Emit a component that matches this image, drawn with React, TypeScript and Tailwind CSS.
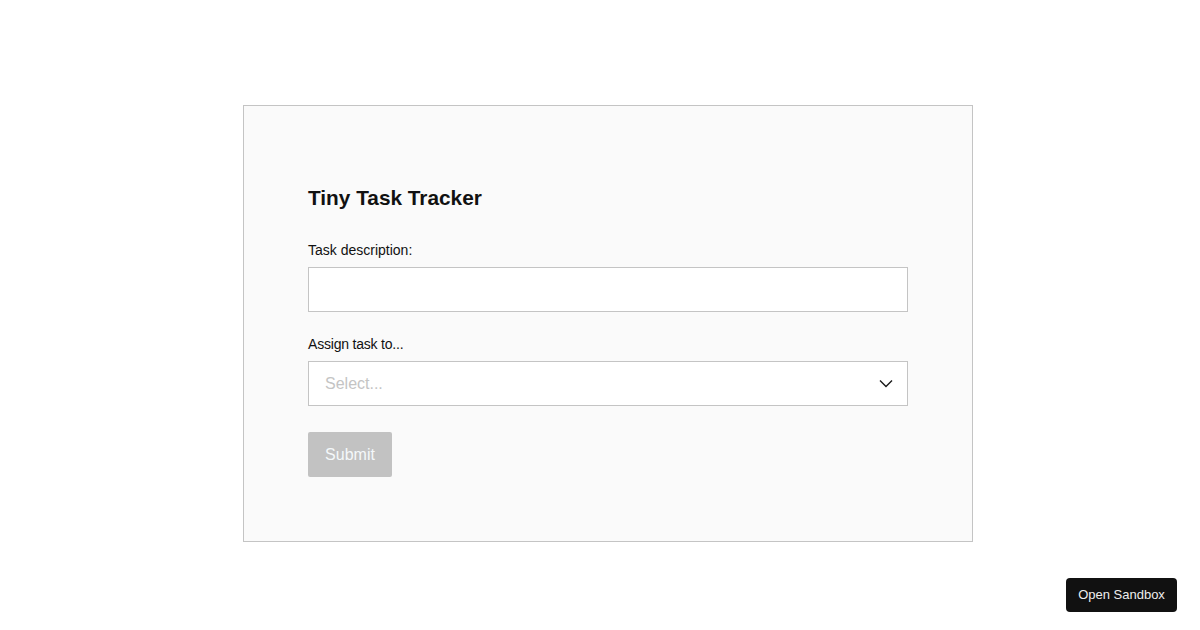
export default function App() {
  return (
    <div className="min-h-[630px] bg-white font-['Liberation_Sans',Arial,sans-serif] text-[#111]">
      <div className="pt-[105px] pl-[243px]">
        {/* Card */}
        <div className="w-[730px] border border-[#c4c4c4] bg-[#fafafa] px-16 pt-[78px] pb-16">
          <h1 className="text-[20.8px] leading-[28px] font-bold">Tiny Task Tracker</h1>

          <label className="mt-[28px] block text-[14px] leading-[20px]">Task description:</label>
          <input
            type="text"
            className="mt-[7px] block h-[45px] w-[600px] border border-[#c4c4c4] bg-white px-4 text-[16px] outline-none"
          />

          <label className="mt-[22px] block text-[14px] leading-[20px] tracking-[-0.2px]">Assign task to...</label>
          <div className="mt-[7px] flex h-[45px] w-[600px] items-center justify-between border border-[#c4c4c4] bg-white pl-4 pr-[14px]">
            <span className="text-[16px] text-[#c4c4c4]">Select...</span>
            <svg width="14" height="9" viewBox="0 0 14 9" fill="none" className="text-[#1a1a1a]">
              <path d="M1 1.5 L7 7.5 L13 1.5" stroke="currentColor" strokeWidth="1.4" />
            </svg>
          </div>

          <button className="mt-[26px] h-[45px] w-[84px] rounded-[2px] bg-[#c2c2c2] text-[16px] text-[#f4f8fa]">
            Submit
          </button>
        </div>
      </div>

      {/* Floating sandbox button */}
      <button className="fixed right-[23px] bottom-[18px] h-[34px] w-[111px] rounded-[4px] bg-[#111] text-[13px] text-[#eee]">
        Open Sandbox
      </button>
    </div>
  );
}
